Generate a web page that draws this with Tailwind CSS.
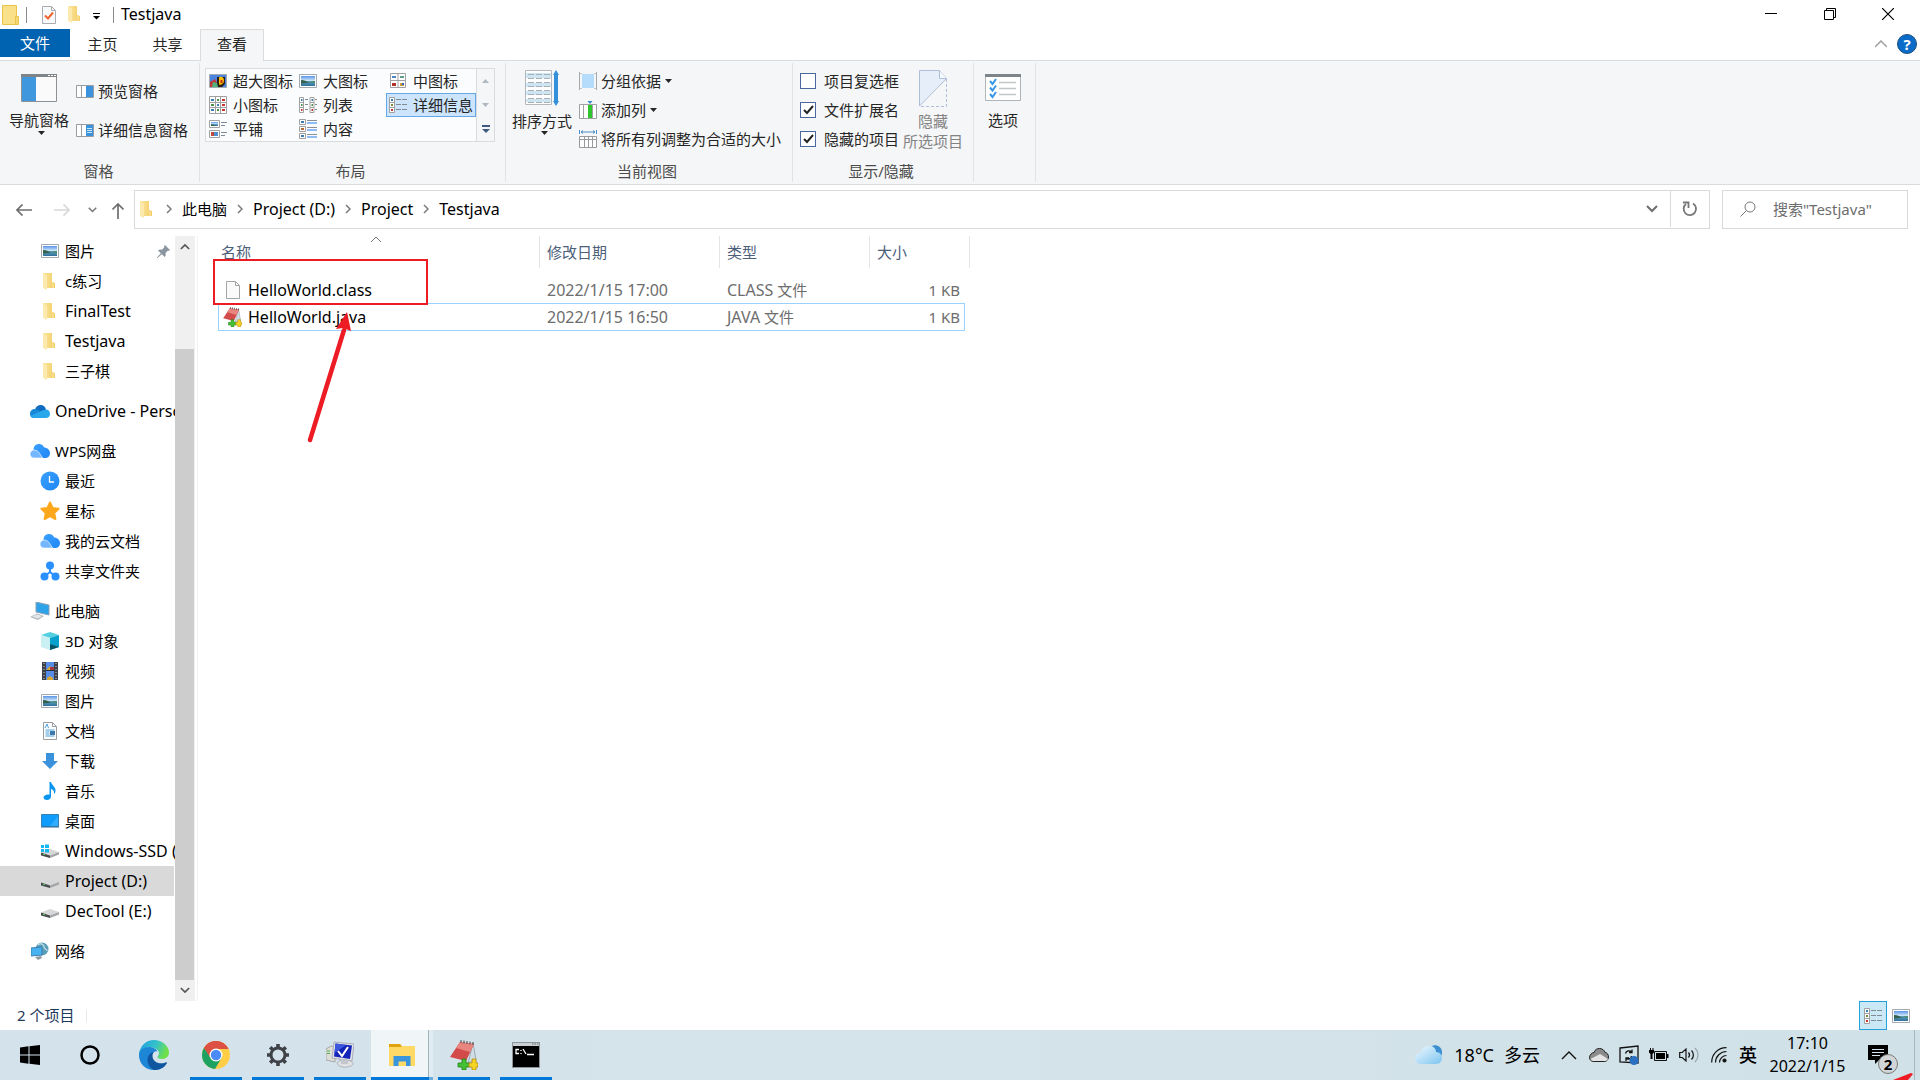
<!DOCTYPE html>
<html lang="zh-CN">
<head>
  <meta charset="UTF-8">
  <meta name="viewport" content="width=device-width, initial-scale=1.0">
  <title>Testjava</title>
  <script src="https://cdn.jsdelivr.net/npm/@tailwindcss/browser@4"></script>
</head>
<body class="h-screen flex flex-col overflow-hidden bg-white text-[15px] leading-5 text-black whitespace-nowrap font-['Noto_Sans','Noto_Sans_CJK_SC',sans-serif]">

  <!-- Shared icons -->
  <svg class="absolute w-0 h-0">
    <defs>
      <linearGradient id="sky" x1="0" y1="0" x2="0" y2="1"><stop offset="0" stop-color="#5a94e8"/><stop offset=".5" stop-color="#d5ecfa"/><stop offset=".55" stop-color="#5d9fc0"/><stop offset="1" stop-color="#2f6f9a"/></linearGradient>
      <linearGradient id="fold" x1="0" y1="0" x2="1" y2="0"><stop offset="0" stop-color="#fbe6a0"/><stop offset="1" stop-color="#f3cd65"/></linearGradient>
      <linearGradient id="blue" x1="0" y1="0" x2="1" y2="1"><stop offset="0" stop-color="#3aa0ff"/><stop offset="1" stop-color="#1f86f5"/></linearGradient>
      <symbol id="i-folder" viewBox="0 0 12 17">
        <path d="M0 0h9v10h3v5H4L0 14z" fill="url(#fold)"/><path d="M0 0l4 3v14l-4-2z" fill="#fce9ae"/><path d="M9 9h2v6H9z" fill="#f7dc8c"/>
      </symbol>
      <symbol id="i-photo" viewBox="0 0 18 14">
        <path d="M.5.5h17v13H.5z" fill="#fff" stroke="#a3a9b0"/><path d="M2 2h14v10H2z" fill="url(#sky)"/><path d="M2 6c4 0 6 2 9 2.500L2 9.500z" fill="#35614c"/><path d="M9 8l7-1v2z" fill="#4b8a63"/>
      </symbol>
      <symbol id="i-details" viewBox="0 0 18 16">
        <path d="M.5.5h5v15h-5zM.5 5.500h5M.5 10.500h5" fill="#fff" stroke="#a0a0a0"/><path d="M2 2h2v2H2z" fill="#3d7eb5"/><path d="M2 7h2v2H2z" fill="#7a8a3a"/><path d="M2 12h2v2H2z" fill="#c8322b"/><path d="M7 2.500h5M13 2.500h5M7 7.500h5M13 7.500h5M7 12.500h5M13 12.500h5" stroke="#808a94"/>
      </symbol>
      <symbol id="i-drive" viewBox="0 0 18 10">
        <path d="M0 4.500L9 1l9 3-9 3.500z" fill="#d5d7d8"/><path d="M0 4.500l9 3V10L0 7.500z" fill="#4a4d4e"/><path d="M9 7.500L18 4v2.500L9 10z" fill="#a3a6a8"/><path d="M2 6.500h2" stroke="#55c45f"/>
      </symbol>
      <symbol id="i-cloud2" viewBox="0 0 20 14">
        <path d="M3.500 6C3.500 2 6 0 9 0c2.500 0 4.500 1.500 5 3.500 3.500 0 6 2.500 6 5.500s-2 5-5 5h-2L5 7z" fill="url(#blue)"/><path d="M4 6c3 0 5 2 6 4l2.500 4H4c-2.500 0-4-1.800-4-4s1.800-4 4-4z" fill="#74b7ff" stroke="#fff" stroke-width=".6"/>
      </symbol>
      <symbol id="i-chev" viewBox="0 0 6 10"><path d="M1 1l4 4-4 4" fill="none" stroke="#7a7a7a" stroke-width="1.500"/></symbol>
      <symbol id="i-caret" viewBox="0 0 7 4"><path d="M0 0h7L3.500 4z" fill="currentColor"/></symbol>
      <symbol id="i-down" viewBox="0 0 12 8"><path d="M1 1l5 5 5-5" fill="none" stroke="currentColor" stroke-width="2"/></symbol>
      <symbol id="i-notepad" viewBox="0 0 28 30">
        <path d="M23 3l3 17-8 3z" fill="#cfdde6" stroke="#8f9aa3" stroke-width=".8"/><path d="M10 2l14 2-8 17-16-4z" fill="#d24a4a"/><path d="M10 2l14 2-4 8-14-4z" fill="#e8857f"/><path d="M11 0v3M14 .5v3M17 1v3M20 1.500v3M23 2v3" stroke="#444"/>
        <path d="M12 19h4v4h4v4h-4v3h-4v-3H8v-4h4z" fill="#45c233" stroke="#1f7d18" stroke-width=".8"/><path d="M22 19h4v4h2v4h-2v3h-4v-3h-3v-4h3z" fill="#f7d524" stroke="#b58b0c" stroke-width=".8"/>
      </symbol>
    </defs>
  </svg>

  <!-- Title bar -->
  <header class="flex h-[29px] items-center">
    <svg class="ml-0.5 w-[17px] h-5" viewBox="0 0 17 20"><path d="M.5.5h14v19H.5z" fill="#fbe08a" stroke="#e8c54a"/><path d="M13.500 11.500h3v8h-3z" fill="#f7d774" stroke="#e8c54a"/></svg>
    <span class="ml-[7px] w-px h-4 bg-[#8c8c8c]"></span>
    <svg class="ml-[15px] w-[14px] h-[18px]" viewBox="0 0 14 18"><path d="M.5.5h9l4 4v13H.5z" fill="#f7f9fb" stroke="#a9acb0"/><path d="M9.500.5v4h4" fill="none" stroke="#a9acb0"/><path d="M3 9.500l3 3 5-6" fill="none" stroke="#f0642c" stroke-width="2"/></svg>
    <svg class="ml-3 w-3 h-[17px]"><use href="#i-folder"/></svg>
    <svg class="ml-[13px] mt-1 w-[7px] h-[7px]" viewBox="0 0 7 7"><path d="M0 .5h7" stroke="#000"/><path d="M0 3h7L3.500 6.500z"/></svg>
    <span class="ml-[13px] w-px h-4 bg-[#8c8c8c]"></span>
    <h1 class="ml-[7px] pb-0.5 text-base leading-5">Testjava</h1>
    <div class="ml-auto mr-[3px] flex h-full pb-px">
      <button class="w-[59px] flex items-center justify-center" aria-label="最小化"><svg class="w-3 h-3" viewBox="0 0 12 12"><path d="M0 5.500h12" stroke="#000"/></svg></button>
      <button class="w-[59px] flex items-center justify-center" aria-label="向下还原"><svg class="w-3 h-3" viewBox="0 0 12 12" fill="none" stroke="#000"><path d="M.5 2.500h9v9h-9zM2.500 2.500v-2h9v9h-2"/></svg></button>
      <button class="w-[58px] flex items-center justify-center" aria-label="关闭"><svg class="w-3 h-3" viewBox="0 0 12 12"><path d="M0 0l12 12M12 0L0 12" stroke="#000" stroke-width="1.200"/></svg></button>
    </div>
  </header>

  <!-- Ribbon tabs -->
  <nav class="flex h-8 border-b border-[#dadbdc] text-[#262626]">
    <button class="w-[70px] h-7 bg-[#0063b1] text-white">文件</button>
    <button class="w-[65px] h-[30px]">主页</button>
    <button class="w-[65px] h-[30px]">共享</button>
    <button class="w-16 h-8 pb-1 bg-[#f5f6f7] border border-b-0 border-[#dadbdc]">查看</button>
    <button class="ml-auto w-8 h-[30px] flex items-center justify-center" aria-label="最小化功能区"><svg class="w-3 h-2" viewBox="0 0 12 8"><path d="M0 7l6-6 6 6" fill="none" stroke="#a0a0a0" stroke-width="1.500"/></svg></button>
    <button class="mt-[5px] mr-[3px] w-5 h-5 rounded-full bg-[#0a6bc9] border border-[#1f5180] text-white font-bold leading-[18px]" aria-label="帮助">?</button>
  </nav>

  <!-- Ribbon -->
  <section class="flex h-[124px] py-0.5 bg-[#f5f6f7] border-b border-[#dadbdc] text-[#262626]">
    <div class="w-[200px] flex flex-col border-r border-[#e2e3e4]">
      <div class="h-[98px] flex">
        <button class="ml-1.5 w-[66px] pt-[11px] flex flex-col items-center justify-start">
          <svg class="w-9 h-7" viewBox="0 0 36 28"><path d="M.5.5h35v27H.5z" fill="#fafafa" stroke="#8d9094"/><path d="M0 0h36v3H0z" fill="#7f8488"/><path d="M27 1h2v1h-2zM30 1h2v1h-2zM33 1h2v1h-2z" fill="#fff"/><path d="M1 3h14v24H1z" fill="#3f97de"/></svg>
          <span class="mt-2">导航窗格</span>
          <svg class="ml-1 mt-px w-[7px] h-1"><use href="#i-caret"/></svg>
        </button>
        <div class="ml-1 pt-[18px] flex flex-col items-start gap-[19px]">
          <button class="flex items-center gap-1"><svg class="w-[18px] h-[13px]" viewBox="0 0 18 13"><path d="M.5.5h17v12H.5zM5.500.5v12" fill="#fff" stroke="#9a9da0"/><path d="M10 1h7v11h-7z" fill="#3a93dc"/></svg>预览窗格</button>
          <button class="flex items-center gap-1"><svg class="w-[18px] h-[13px]" viewBox="0 0 18 13"><path d="M.5.5h17v12H.5zM5.500.5v12" fill="#fff" stroke="#9a9da0"/><path d="M10 1h7v11h-7z" fill="#3a93dc"/><path d="M11 4.500h5M11 6.500h5M11 8.500h5" stroke="#c9e4f8"/></svg>详细信息窗格</button>
        </div>
      </div>
      <div class="pr-0.5 text-center text-[#4c4c4c]">窗格</div>
    </div>

    <div class="w-[306px] flex flex-col border-r border-[#e2e3e4]">
      <div class="h-[98px]">
        <div class="ml-[5px] mt-[5px] w-[290px] h-[74px] flex border border-[#dadbdc] bg-[#fbfcfd]">
          <div class="grid grid-cols-[90px_90px_90px] grid-rows-[24px_24px_24px]">
            <button class="flex items-center gap-1.5 pl-[3px]"><svg class="w-[18px] h-[14px]" viewBox="0 0 18 14"><path d="M.5.5h17v13H.5z" fill="#4a83e0" stroke="#a3a9b0"/><path d="M1 8l5-3 4 8H1z" fill="#c2383a"/><path d="M8 3h8v7l-3 3H8z" fill="#2b1d13"/><path d="M10 3.500c2-2 5 0 5 3s-3 5-5 4z" fill="#ffbf00"/><path d="M11.500 6h2v3h-2z" fill="#c22d16"/><path d="M4 8l4 1 1 4H3z" fill="#4fb37c"/></svg>超大图标</button>
            <button class="flex items-center gap-1.5 pl-[3px]"><svg class="w-[18px] h-[14px]"><use href="#i-photo"/></svg>大图标</button>
            <button class="flex items-center gap-1.5 pl-[3px]"><svg class="w-[18px] h-4" viewBox="0 0 18 16"><path d="M1.500.5h15v14h-15zM9 .5v14M1.500 7.500h15" fill="#fff" stroke="#a0a0a0"/><path d="M3 3h4v2H3z" fill="#4b87c4"/><path d="M11 3h4v2h-4z" fill="#5e9c86"/><path d="M3 10h4v3H3z" fill="#b3302a"/><path d="M11 10h4v3h-4z" fill="#c9a038"/><path d="M13 10h2v2h-2z" fill="#3860c0"/></svg>中图标</button>
            <button class="flex items-center gap-1.5 pl-[3px]"><svg class="w-[18px] h-[18px]" viewBox="0 0 18 18"><path d="M.5.5h17v17H.5zM6.500.5v17M11.500.5v17M.5 6.500h17M.5 11.500h17" fill="#fff" stroke="#a0a0a0"/><path d="M2 3h3v2H2zM2 13h3v2H2zM8 8h2v2H8z" fill="#3d7eb5"/><path d="M8 3h2v2H8zM2 8h3v2H2zM8 13h2v2H8z" fill="#4e8f4a"/><path d="M13 3h3v2h-3zM13 8h3v2h-3zM13 13h3v2h-3z" fill="#c8322b"/></svg>小图标</button>
            <button class="flex items-center gap-1.5 pl-[3px]"><svg class="w-[18px] h-4" viewBox="0 0 18 16"><path d="M.5.5h4v15h-4zM.5 5.500h4M.5 10.500h4M11 .5h4v15h-4zM11 5.500h4M11 10.500h4" fill="#fff" stroke="#a0a0a0"/><path d="M2 2h1.500v2H2zM12.500 2H14v2h-1.500z" fill="#3d7eb5"/><path d="M2 7h1.500v2H2zM12.500 7H14v2h-1.500z" fill="#4e8f4a"/><path d="M2 12h1.500v2H2zM12.500 12H14v2h-1.500z" fill="#c8322b"/><path d="M6 2.500h3M6 7.500h3M6 12.500h3M16 2.500h2M16 7.500h2M16 12.500h2" stroke="#808a94"/></svg>列表</button>
            <button class="flex items-center gap-1.5 pl-0.5 bg-[#cce4fc] border border-[#66a7e8]"><svg class="w-[18px] h-4"><use href="#i-details"/></svg>详细信息</button>
            <button class="flex items-center gap-1.5 pl-[3px]"><svg class="w-[18px] h-[18px]" viewBox="0 0 18 18"><path d="M.5.5h10v7H.5zM.5 10.500h10v7H.5z" fill="#fff" stroke="#a0a0a0"/><path d="M2 2h7v4H2z" fill="url(#sky)"/><path d="M2 4l5 2H2z" fill="#35614c"/><path d="M2 12h3v4H2z" fill="#c24a3a"/><path d="M5 12h4v4H5z" fill="#4e8fd0"/><path d="M12 2.500h6M12 5.500h4M12 12.500h6M12 15.500h4" stroke="#808a94"/></svg>平铺</button>
            <button class="flex items-center gap-1.5 pl-[3px]"><svg class="w-[18px] h-5" viewBox="0 0 18 20"><path d="M.5.5h6v5h-6zM.5 7.500h6v5h-6zM.5 14.500h6v5h-6z" fill="#fff" stroke="#a0a0a0"/><path d="M2 2h3v2H2zM2 16h3v2H2z" fill="#3d7eb5"/><path d="M2 9h3v2H2z" fill="#b36b35"/><path d="M8 1.500h10M8 8.500h10M8 15.500h10" stroke="#8a9097"/><path d="M8 4h10M8 11h10M8 18h10" stroke="#6ba6f5" stroke-width="1.500"/></svg>内容</button>
          </div>
          <div class="ml-auto w-[18px] grid grid-rows-3 border-l border-[#dadbdc] bg-[#f5f6f7]">
            <button class="flex items-center justify-center text-[#b0b8c2]" aria-label="向上"><svg class="w-[7px] h-1 rotate-180"><use href="#i-caret"/></svg></button>
            <button class="flex items-center justify-center text-[#b0b8c2]" aria-label="向下"><svg class="w-[7px] h-1"><use href="#i-caret"/></svg></button>
            <button class="flex items-center justify-center" aria-label="更多"><svg class="w-2 h-2" viewBox="0 0 8 8" fill="#3f5a80"><path d="M0 0h8v2H0zM0 4h8L4 8z"/></svg></button>
          </div>
        </div>
      </div>
      <div class="pr-1 text-center text-[#4c4c4c]">布局</div>
    </div>

    <div class="w-[287px] flex flex-col border-r border-[#e2e3e4]">
      <div class="h-[98px] flex">
        <button class="ml-[3px] w-[66px] pt-[7px] flex flex-col items-center justify-start">
          <svg class="w-[34px] h-9" viewBox="0 0 34 36"><path d="M.5.5h26v34H.5z" fill="#fff" stroke="#b4b8bc"/><path d="M1 3h25v5H1zM1 13h25v4H1zM1 21h25v4H1zM1 29h25v3H1z" fill="#cfe6f2"/><path d="M3 4.500h6M11 4.500h6M19 4.500h6M3 8.500h6M11 8.500h6M19 8.500h6M3 12.500h6M11 12.500h6M19 12.500h6M3 16.500h6M11 16.500h6M19 16.500h6M3 20.500h6M11 20.500h6M19 20.500h6M3 24.500h6M11 24.500h6M19 24.500h6M3 28.500h6M11 28.500h6M19 28.500h6M3 32.500h6M11 32.500h6M19 32.500h6" stroke="#a5afb6"/><path d="M31 0l3 5h-1v26h1l-3 5-3-5h1V5h-1z" fill="#3590dc"/></svg>
          <span class="mt-[5px]">排序方式</span>
          <svg class="ml-1 w-[7px] h-1"><use href="#i-caret"/></svg>
        </button>
        <div class="ml-1 pt-2 flex flex-col items-start gap-[9px]">
          <button class="flex items-center gap-1"><svg class="w-[18px] h-[18px]" viewBox="0 0 18 18"><path d="M.5 0v18M17.500 0v18" stroke="#a8abae"/><path d="M1 1.500h2M1 16.500h2M15 1.500h2M15 16.500h2" stroke="#c9cbcd"/><path d="M3 2h12v14H3z" fill="#b5dcfa"/></svg>分组依据<svg class="w-[7px] h-1"><use href="#i-caret"/></svg></button>
          <button class="flex items-center gap-1"><svg class="w-[18px] h-[18px]" viewBox="0 0 18 18"><path d="M.5 3.500h17v14H.5zM4.500 3.500v14M13.500 3.500v14" fill="#fff" stroke="#a0a3a6"/><path d="M9 4h4v13H9z" fill="#2fc52f"/><path d="M8.500 0h5L11 3z" fill="#3a86cf"/></svg>添加列<svg class="w-[7px] h-1"><use href="#i-caret"/></svg></button>
          <button class="flex items-center gap-1"><svg class="w-[18px] h-[18px]" viewBox="0 0 18 18"><path d="M.5 6.500h17v11H.5zM.5 9.500h17M5.500 6.500v11M9.500 6.500v11M13.500 6.500v11" fill="#fff" stroke="#989b9e"/><path d="M.5 0v4M17.500 0v4M2 2h14M4 .5L2 2l2 1.500M14 .5L16 2l-2 1.500" fill="none" stroke="#4b8cc8"/></svg>将所有列调整为合适的大小</button>
        </div>
      </div>
      <div class="pr-1 text-center text-[#4c4c4c]">当前视图</div>
    </div>

    <div class="w-[181px] flex flex-col border-r border-[#e2e3e4]">
      <div class="h-[98px] flex">
        <div class="ml-[7px] pt-2 w-[100px] flex flex-col gap-[9px]">
          <label class="relative flex items-center gap-2"><input type="checkbox" class="peer appearance-none w-4 h-4 bg-white border border-[#4a68a0]">项目复选框<svg class="hidden peer-checked:block absolute left-[3px] w-[11px] h-[10px]" viewBox="0 0 11 10"><path d="M1 5l3 3 6-7" fill="none" stroke="#222" stroke-width="2"/></svg></label>
          <label class="relative flex items-center gap-2"><input type="checkbox" checked class="peer appearance-none w-4 h-4 bg-white border border-[#4a68a0]">文件扩展名<svg class="hidden peer-checked:block absolute left-[3px] w-[11px] h-[10px]" viewBox="0 0 11 10"><path d="M1 5l3 3 6-7" fill="none" stroke="#222" stroke-width="2"/></svg></label>
          <label class="relative flex items-center gap-2"><input type="checkbox" checked class="peer appearance-none w-4 h-4 bg-white border border-[#4a68a0]">隐藏的项目<svg class="hidden peer-checked:block absolute left-[3px] w-[11px] h-[10px]" viewBox="0 0 11 10"><path d="M1 5l3 3 6-7" fill="none" stroke="#222" stroke-width="2"/></svg></label>
        </div>
        <button class="w-[66px] pt-[7px] flex flex-col items-center justify-start text-[#838383]" disabled>
          <svg class="w-7 h-[37px]" viewBox="0 0 28 37"><path d="M.5 36V.5h20l7 8z" fill="#e6eefa" stroke="#b0bfd8"/><path d="M20.500.5v8h7" fill="#f5f8fd" stroke="#b0bfd8"/><path d="M27.500 9v27.500H1" fill="none" stroke="#b0bfd8" stroke-dasharray="3 2"/></svg>
          <span class="mt-1 leading-5">隐藏</span>
          <span class="leading-5">所选项目</span>
        </button>
      </div>
      <div class="pr-1 text-center text-[#4c4c4c]">显示/隐藏</div>
    </div>

    <div class="w-[62px] border-r border-[#e2e3e4]">
      <button class="w-[58px] pt-[11px] flex flex-col items-center">
        <svg class="w-9 h-7" viewBox="0 0 36 28"><path d="M.5.5h35v26H.5z" fill="#fff" stroke="#b2b5b8"/><path d="M0 0h36v3H0z" fill="#7f8488"/><path d="M14 8.500h17M14 14.500h17M14 20.500h17" stroke="#c2c5c8" stroke-width="1.500"/><path d="M5 7l2.500 3L11 5M5 13.500l2.500 3 3.500-5M5 20l2.500 3 3.500-5" fill="none" stroke="#3a98e6" stroke-width="2"/></svg>
        <span class="mt-2">选项</span>
      </button>
    </div>
  </section>

  <!-- Address bar -->
  <section class="flex h-[51px] pt-[5px] pb-[7px] pr-3">
    <button class="ml-2 w-8 flex items-center justify-center" aria-label="后退"><svg class="w-4 h-3" viewBox="0 0 16 12"><path d="M16 6H1M6.500.5L1 6l5.500 5.500" fill="none" stroke="#6e6e6e" stroke-width="1.700"/></svg></button>
    <button class="ml-1.5 w-8 flex items-center justify-center" aria-label="前进" disabled><svg class="w-4 h-3" viewBox="0 0 16 12"><path d="M0 6h15M9.500.5L15 6l-5.500 5.500" fill="none" stroke="#d8d8d8" stroke-width="1.700"/></svg></button>
    <button class="ml-1.5 w-4 flex items-center justify-center text-[#777]" aria-label="最近浏览的位置"><svg class="w-[9px] h-1.5"><use href="#i-down"/></svg></button>
    <button class="ml-2 w-5 mr-1.5 flex items-center justify-center" aria-label="上移"><svg class="mt-0.5 w-3 h-4" viewBox="0 0 12 16"><path d="M6 16V1M.5 6.500L6 1l5.500 5.500" fill="none" stroke="#6e6e6e" stroke-width="1.700"/></svg></button>
    <div class="flex-1 flex items-center border border-[#d9d9d9] pl-[5px] pb-px">
      <svg class="w-3 h-[17px]"><use href="#i-folder"/></svg>
      <svg class="ml-3.5 w-1.5 h-2.5"><use href="#i-chev"/></svg>
      <a href="#" class="ml-2.5">此电脑</a>
      <svg class="ml-2.5 w-1.5 h-2.5"><use href="#i-chev"/></svg>
      <a href="#" class="ml-2.5 text-base leading-5">Project (D:)</a>
      <svg class="ml-2.5 w-1.5 h-2.5"><use href="#i-chev"/></svg>
      <a href="#" class="ml-2.5 text-base leading-5">Project</a>
      <svg class="ml-2.5 w-1.5 h-2.5"><use href="#i-chev"/></svg>
      <a href="#" class="ml-2.5 text-base leading-5">Testjava</a>
      <button class="ml-auto w-9 h-full flex items-center justify-center text-[#6e6e6e]" aria-label="以前的位置"><svg class="w-3 h-2"><use href="#i-down"/></svg></button>
      <button class="w-[39px] h-full flex items-center justify-center border-l border-[#d9d9d9]" aria-label="刷新"><svg class="w-4 h-4" viewBox="0 0 16 16"><path d="M11 2.500A6.200 6.200 0 1 1 4 3" fill="none" stroke="#777" stroke-width="1.800"/><path d="M1 1.500h5.500V7" fill="none" stroke="#777" stroke-width="1.800"/></svg></button>
    </div>
    <label class="ml-3 w-[186px] flex items-center border border-[#d9d9d9] pl-[17px] pb-px">
      <svg class="w-4 h-4 shrink-0" viewBox="0 0 16 16"><circle cx="10" cy="6" r="5" fill="none" stroke="#777"/><path d="M6.500 9.500L.5 15.500" stroke="#777"/></svg>
      <input type="text" placeholder="搜索&quot;Testjava&quot;" aria-label="搜索" class="ml-[17px] w-[126px] outline-none placeholder:text-[#6d6d6d]">
    </label>
  </section>

  <!-- Navigation pane and file list -->
  <main class="flex-1 min-h-0 flex">
    <aside class="w-[175px] overflow-hidden">
      <ul>
        <li class="h-[30px] pl-[41px] flex items-center gap-1.5"><svg class="w-[18px] h-[14px]"><use href="#i-photo"/></svg>图片
          <svg class="ml-auto mr-[5px] w-[13px] h-[13px]" viewBox="0 0 13 13" fill="#8a959f"><path d="M8 0l5 5-1 1-1-.5L8.500 8c.5 2 0 3-.8 4L1 5.500c1-1 2.200-1.300 4-.8L7.500 2 7 1z"/><path d="M4 8l1 1-4.500 4H0v-.5z"/></svg>
        </li>
        <li class="h-[30px] pl-[43px] flex items-center gap-2.5"><svg class="w-3 h-[17px]"><use href="#i-folder"/></svg>c练习</li>
        <li class="h-[30px] pl-[43px] flex items-center gap-2.5 text-base leading-5"><svg class="w-3 h-[17px]"><use href="#i-folder"/></svg>FinalTest</li>
        <li class="h-[30px] pl-[43px] flex items-center gap-2.5 text-base leading-5"><svg class="w-3 h-[17px]"><use href="#i-folder"/></svg>Testjava</li>
        <li class="h-[30px] pl-[43px] flex items-center gap-2.5"><svg class="w-3 h-[17px]"><use href="#i-folder"/></svg>三子棋</li>
      </ul>
      <ul class="mt-2.5">
        <li class="h-[30px] pl-[30px] flex items-center gap-[5px] text-base leading-5"><svg class="w-5 h-[13px] shrink-0" viewBox="0 0 20 13"><path d="M5 4.500C6 1.500 8 0 10.500 0c3 0 5 2 5.500 4.500L10 9z" fill="#0f6cc0"/><path d="M4 13c-3 0-4-2-4-4 0-3 2-5 5-5 2 0 3 .8 5 2l-4 7z" fill="#1789d6"/><path d="M16 4.500c2.500 0 4 2 4 4.500 0 2.500-2 4-4 4H4c-2 0-3-1-3.500-2L11 6z" fill="#28a8ea"/></svg>OneDrive - Personal</li>
      </ul>
      <ul class="mt-2.5">
        <li class="h-[30px] pl-[30px] flex items-center gap-[5px]"><svg class="w-5 h-[14px]"><use href="#i-cloud2"/></svg>WPS网盘</li>
        <li class="h-[30px] pl-10 flex items-center gap-[5px]"><svg class="w-5 h-5" viewBox="0 0 20 20"><circle cx="10" cy="10" r="9.500" fill="url(#blue)"/><path d="M9.500 5v6H14" fill="none" stroke="#fff" stroke-width="1.300"/></svg>最近</li>
        <li class="h-[30px] pl-10 flex items-center gap-[5px]"><svg class="w-5 h-5" viewBox="0 0 20 20"><path d="M10 1.500l2.600 5.500 6 .8-4.400 4.200 1.200 6L10 15.200 4.600 18l1.200-6L1.400 7.800l6-.8z" fill="#fda81c" stroke="#fda81c" stroke-width="2" stroke-linejoin="round"/></svg>星标</li>
        <li class="h-[30px] pl-10 flex items-center gap-[5px]"><svg class="w-5 h-[14px]"><use href="#i-cloud2"/></svg>我的云文档</li>
        <li class="h-[30px] pl-10 flex items-center gap-[5px]"><svg class="w-5 h-5" viewBox="0 0 20 20" fill="#2a90ff"><path d="M10 5v6M10 11l-5 4M10 11l5 4" stroke="#2a90ff" stroke-width="2"/><circle cx="10" cy="4.500" r="4"/><circle cx="4.500" cy="15.500" r="4"/><circle cx="15.500" cy="15.500" r="4"/></svg>共享文件夹</li>
      </ul>
      <ul class="mt-2.5">
        <li class="h-[30px] pl-[30px] flex items-center gap-[5px]"><svg class="w-5 h-[18px]" viewBox="0 0 20 18"><path d="M6 0l13 3v10L6 10z" fill="#2ea3ea" stroke="#8ea1b0"/><path d="M0 15l7-3.500 7 2.500-6 4z" fill="#b4b9bd"/><path d="M2 14.500l5-2 5 1.500-4 2.500z" fill="#e4e6e8"/></svg>此电脑</li>
        <li class="h-[30px] pl-[41px] flex items-center gap-1.5"><svg class="w-[18px] h-[18px]" viewBox="0 0 18 18"><path d="M9 0l9 3-9 3-9-3z" fill="#54cfe0"/><path d="M0 3l9 3v12l-9-3z" fill="#c9f0f2"/><path d="M9 6l9-3v12l-9 3z" fill="#08a0cc"/><path d="M9 12l9 3-9 3z" fill="#0b5568"/></svg>3D 对象</li>
        <li class="h-[30px] pl-[41px] flex items-center gap-1.5"><svg class="w-[18px] h-[18px]" viewBox="0 0 18 18"><path d="M1 0h16v18H1z" fill="#3c4048"/><path d="M5 0h8v8H5zM5 9h8v9H5z" fill="#558de8"/><path d="M6 7l3-3 3 3v2H6zM6 16l3-2 3 2v2H6z" fill="#d8a832"/><path d="M9 5h4v3H9z" fill="#a83b3a"/><path d="M5 8.500h8" stroke="#26303c"/><path d="M3 1v17M15 1v17" stroke="#d0d0d0" stroke-dasharray="1 2"/></svg>视频</li>
        <li class="h-[30px] pl-[41px] flex items-center gap-1.5"><svg class="w-[18px] h-[14px]"><use href="#i-photo"/></svg>图片</li>
        <li class="h-[30px] pl-[41px] flex items-center gap-1.5"><svg class="w-[18px] h-[18px]" viewBox="0 0 18 18"><path d="M2.500.5h9l4 4v13h-13z" fill="#fbfcfd" stroke="#9a9da0"/><path d="M11.500.5v4h4" fill="none" stroke="#9a9da0"/><path d="M4 6l2-4 1.500 4M4.500 8h9M4.500 10h4M4.500 12h4M4.500 14h9" fill="none" stroke="#4fa0dc"/><path d="M9 9h5v4H9z" fill="#3d78a8"/></svg>文档</li>
        <li class="h-[30px] pl-[41px] flex items-center gap-1.5"><svg class="w-[18px] h-[18px]" viewBox="0 0 18 18"><path d="M5 1h8v8h4l-8 8-8-8h4z" fill="#3a92dc"/></svg>下载</li>
        <li class="h-[30px] pl-[41px] flex items-center gap-1.5"><svg class="w-[18px] h-[18px]" viewBox="0 0 18 18"><path d="M8.500 0H10c.5 3 5 5 4.500 9-.1 1.500-.7 2.500-1.500 3 .5-3-1-4.500-3-5v7.500c0 2-1.800 3.500-4 3.500s-3.500-1-3.500-2.500C2.500 13.500 5 12 8.500 12.500z" fill="#0a96f0"/></svg>音乐</li>
        <li class="h-[30px] pl-[41px] flex items-center gap-1.5"><svg class="w-[18px] h-[14px]" viewBox="0 0 18 14"><path d="M.5.5h17v12H.5z" fill="#109cfa" stroke="#3582b8"/><path d="M9 12L17 2v10z" fill="#32adff"/><path d="M0 13h18" stroke="#2b6c9c"/></svg>桌面</li>
        <li class="h-[30px] pl-[41px] flex items-center gap-1.5 text-base leading-5"><svg class="w-[18px] h-[14px] shrink-0" viewBox="0 0 18 14"><use href="#i-drive" y="4" width="18" height="10"/><path d="M0 1h3v3H0zM4 .5h4V4H4zM0 5h3v3H0zM4 5h4v3.500H4z" fill="#14b8f0"/></svg>Windows-SSD (C:)</li>
        <li class="h-[30px] mr-px pl-[41px] flex items-center gap-1.5 bg-[#d9d9d9] text-base leading-5"><svg class="mt-1 w-[18px] h-2.5"><use href="#i-drive"/></svg>Project (D:)</li>
        <li class="h-[30px] pl-[41px] flex items-center gap-1.5 text-base leading-5"><svg class="mt-1 w-[18px] h-2.5"><use href="#i-drive"/></svg>DecTool (E:)</li>
      </ul>
      <ul class="mt-2.5">
        <li class="h-[30px] pl-[31px] flex items-center gap-1.5"><svg class="w-[18px] h-[18px]" viewBox="0 0 18 18"><circle cx="11" cy="7" r="6.500" fill="#5b9cb8"/><path d="M7 3c3-3 6 0 6 2s3 2 3 4" fill="none" stroke="#b8dbe6" stroke-width="1.500"/><path d="M0 6l11-1v8L0 14z" fill="#46b2f2" stroke="#3c7fae"/><path d="M4 15l6-1 1 2-4 2z" fill="#8c9aa3"/></svg>网络</li>
      </ul>
    </aside>
    <div class="w-5 flex flex-col bg-[#f0f0f0] text-[#555]">
      <button class="h-5 flex items-center justify-center" aria-label="向上滚动"><svg class="w-2.5 h-[7px] rotate-180"><use href="#i-down"/></svg></button>
      <div class="mt-[93px] mr-px flex-1 bg-[#cdcdcd]"></div>
      <button class="h-[21px] flex items-center justify-center" aria-label="向下滚动"><svg class="w-2.5 h-[7px]"><use href="#i-down"/></svg></button>
    </div>

    <div class="relative flex-1 ml-0.5 border-l border-[#f2f2f2] pl-5">
      <table class="w-[752px] table-fixed border-separate border-spacing-0 text-left">
        <colgroup><col class="w-[322px]"><col class="w-[180px]"><col class="w-[150px]"><col class="w-[95px]"><col class="w-[5px]"></colgroup>
        <thead>
          <tr class="text-[#4c607a]">
            <th class="p-0 h-10 align-top font-normal relative"><div class="h-8 pl-[3px] flex items-center border-r border-[#e5e5e5]">名称</div><svg class="absolute left-[152px] top-0 w-3 h-[7px]" viewBox="0 0 12 7"><path d="M1 6l5-5 5 5" fill="none" stroke="#777"/></svg></th>
            <th class="p-0 align-top font-normal"><div class="h-8 pl-[7px] flex items-center border-r border-[#e5e5e5]">修改日期</div></th>
            <th class="p-0 align-top font-normal"><div class="h-8 pl-[7px] flex items-center border-r border-[#e5e5e5]">类型</div></th>
            <th class="p-0 align-top font-normal"><div class="h-8 pl-[7px] flex items-center">大小</div></th>
            <th class="p-0 align-top"><div class="h-8 border-r border-[#e5e5e5]"></div></th>
          </tr>
        </thead>
        <tbody class="text-[#6d6d6d]">
          <tr>
            <td class="p-0 h-[27px]"><div class="pl-2 flex items-center gap-2 text-base leading-5 text-black"><svg class="w-[14px] h-[18px]" viewBox="0 0 14 18"><path d="M.5.5h9l4 4v13H.5z" fill="#fafafa" stroke="#a5a5a5"/><path d="M9.500.5v4h4" fill="none" stroke="#a5a5a5"/></svg>HelloWorld.class</div></td>
            <td class="p-0 pl-[7px] text-base leading-5">2022/1/15 17:00</td>
            <td class="p-0 pl-[7px]"><span class="text-base leading-5">CLASS</span> 文件</td>
            <td class="p-0 pr-[5px] text-right">1 KB</td>
            <td class="p-0"></td>
          </tr>
          <tr>
            <td class="p-0 h-7 border-y border-l border-[#99d1ff]"><div class="pl-1 flex items-center gap-1.5 text-base leading-5 text-black"><svg class="w-[19px] h-5"><use href="#i-notepad"/></svg>HelloWorld.java</div></td>
            <td class="p-0 pl-[7px] border-y border-[#99d1ff] text-base leading-5">2022/1/15 16:50</td>
            <td class="p-0 pl-[7px] border-y border-[#99d1ff]"><span class="text-base leading-5">JAVA</span> 文件</td>
            <td class="p-0 pr-1 text-right border-y border-r border-[#99d1ff]">1 KB</td>
            <td class="p-0"></td>
          </tr>
        </tbody>
      </table>
      <!-- Red marker box and arrow -->
      <div class="absolute left-[15px] top-[23px] w-[215px] h-[46px] border-2 border-[#ed1c24]"></div>
      <svg class="absolute left-[106px] top-[72px] w-[60px] h-[140px]" viewBox="0 0 60 140"><path d="M6 132L40 22" stroke="#ed1c24" stroke-width="4.500" stroke-linecap="round"/><path d="M43 4l4 19-8-3-7 1z" fill="#ed1c24"/></svg>
    </div>
  </main>

  <!-- Status bar -->
  <footer class="flex h-[29px] items-center pl-[17px] pr-[5px] text-[#1e395b]">
    <span class="pb-0.5">2 个项目</span>
    <span class="ml-3 w-px h-3 bg-[#e8e8e8]"></span>
    <button class="ml-auto w-7 h-[29px] flex items-center justify-center bg-[#cbe8f6] border border-[#26a0da]" aria-label="详细信息"><svg class="w-[18px] h-4"><use href="#i-details"/></svg></button>
    <button class="w-7 h-[29px] flex items-center justify-center" aria-label="大缩略图"><svg class="w-[18px] h-[14px]"><use href="#i-photo"/></svg></button>
  </footer>

  <!-- Taskbar -->
  <section class="relative flex h-[50px] bg-linear-to-r from-[#d4e2ec] via-[#d5e3ea] to-[#d0e1e8]">
    <button class="w-[60px] flex items-center justify-center" aria-label="开始"><svg class="w-5 h-5" viewBox="0 0 20 20"><path d="M0 2.500l8.500-1.200v8.200H0zM9.500 1.200L20 0v9.500H9.500zM0 10.500h8.500v8.200L0 17.500zM9.500 10.500H20V20L9.500 18.800z"/></svg></button>
    <button class="w-[60px] flex items-center justify-center" aria-label="搜索"><svg class="w-5 h-5" viewBox="0 0 20 20"><circle cx="10" cy="10" r="8.500" fill="none" stroke="#000" stroke-width="2.500"/></svg></button>
    <button class="ml-[3px] w-[62px] flex items-center justify-center" aria-label="Edge">
      <svg class="w-[30px] h-[30px]" viewBox="0 0 30 30"><defs><linearGradient id="edge" x1="0" y1="0" x2="1" y2=".3"><stop offset="0" stop-color="#1b9de2"/><stop offset=".6" stop-color="#35c3c8"/><stop offset="1" stop-color="#6fe04a"/></linearGradient></defs><path d="M0 14C1 6 7 0 15 0s15 6 15 12.500c0 4-3 6.500-7 6.500-3 0-4.500-1-4.500-2s1.500-1.500 1.500-4c0-2-2-4-5-5C9 6 2 9 0 14z" fill="url(#edge)"/><path d="M13 7.500C7 6 1 9 0 14c-.5 9 6 16 15 16l2-1C8 26 8 14 15 12c1-.8 2.500-1 3.500-.5C17.500 9.500 15.500 8 13 7.500z" fill="#1d86d6"/><path d="M14 12c-8 3-7 14 1 18 6 .5 11-3 13-7 0-1-.5-1-1.500-.6-6 2.600-13-.4-13-6.400 0-1.700.5-3 1.500-4z" fill="#0f56a0"/></svg>
    </button>
    <button class="w-[62px] flex items-center justify-center relative" aria-label="Chrome">
      <svg class="w-7 h-7" viewBox="0 0 28 28"><circle cx="14" cy="14" r="14" fill="#ffcd46"/><path d="M14 14L2 6.800A14 14 0 0 0 13 28L19.500 17z" fill="#1da261"/><path d="M14 14L2 7A14 14 0 0 1 26.500 8H14z" fill="#dd5144"/><path d="M2 7l6.500 10L14 8h12.500C20-3 7-2 2 7z" fill="#dd5144"/><circle cx="14" cy="14" r="6.500" fill="#fff"/><circle cx="14" cy="14" r="5.200" fill="#4c8bf5"/></svg>
      <span class="absolute bottom-0 inset-x-[5px] h-[3px] bg-[#0078d7]"></span>
    </button>
    <button class="w-[62px] flex items-center justify-center relative" aria-label="设置">
      <svg class="w-6 h-6" viewBox="0 0 24 24" fill="none" stroke="#3f4347"><circle cx="12" cy="12" r="7" stroke-width="3"/><path d="M12 5V1M12 19v4M5 12H1M19 12h4M7.050 7.050L4.200 4.200M16.950 16.950l2.850 2.850M7.050 16.950L4.200 19.800M16.950 7.050l2.850-2.850" stroke-width="3.600"/></svg>
      <span class="absolute bottom-0 inset-x-[5px] h-[3px] bg-[#0078d7]"></span>
    </button>
    <button class="w-[62px] flex items-center justify-center relative" aria-label="系统配置">
      <svg class="w-7 h-7" viewBox="0 0 28 28"><path d="M0 8l5-3 4 1v15l-9-2z" fill="#dddeda" stroke="#9a9a98" stroke-width=".8"/><path d="M1 10h3M1 12.500h3" stroke="#4cab42"/><path d="M8 1l20 2-2 17L6 17z" fill="#e2e3e8" stroke="#9aa0ae" stroke-width=".8"/><path d="M9.500 2.500L26 4.500l-2 13.500L8 15.500z" fill="#1424b8"/><path d="M9.500 2.500L20 4 8.500 12z" fill="#3c57de"/><path d="M12 10l4 5 6-9" fill="none" stroke="#fff" stroke-width="2"/><path d="M11 22c2-4 14-4 16 0s-14 7-16 0z" fill="#dfe1e4" stroke="#a5a8ac" stroke-width=".8"/><path d="M15 18l7 1v4h-7z" fill="#c3c6cb"/></svg>
      <span class="absolute bottom-0 inset-x-[5px] h-[3px] bg-[#0078d7]"></span>
    </button>
    <button class="w-[62px] flex items-center relative bg-[#e1ecf2] pr-1" aria-label="文件资源管理器">
      <span class="w-[58px] h-full flex items-center justify-center pl-1 bg-[#f0f5f8] border-r border-[#9fb3bd]">
        <svg class="w-[26px] h-6" viewBox="0 0 26 24"><path d="M0 1h11l2 2v3H0z" fill="#e0a20e"/><path d="M0 4h11l2-1h13v20H0z" fill="#ffd966"/><path d="M4.500 23V13h17v10H17v-4.500H9.500V23z" fill="#3a96dc"/></svg>
      </span>
      <span class="absolute bottom-0 inset-x-0 h-[3px] bg-[#0078d7] border-r-4 border-[#6cadE0]"></span>
    </button>
    <button class="w-[62px] flex items-center justify-center relative" aria-label="文本编辑器">
      <svg class="w-7 h-[30px]"><use href="#i-notepad"/></svg>
      <span class="absolute bottom-0 inset-x-[5px] h-[3px] bg-[#0078d7]"></span>
    </button>
    <button class="w-[62px] flex items-center justify-center relative" aria-label="命令提示符">
      <svg class="w-7 h-[26px]" viewBox="0 0 28 26"><path d="M.5.5h27v25H.5z" fill="#000" stroke="#8e9498"/><path d="M1 1h26v3H1z" fill="#c9d0d4"/><path d="M20 2h1.500M22.500 2H24M25 2h1.500" stroke="#666"/><path d="M7 7.500H4v4h3M9 8v1M9 11v1M11 7l3 5M15 12.500h7" fill="none" stroke="#fff" stroke-width="1.300"/></svg>
      <span class="absolute bottom-0 inset-x-[5px] h-[3px] bg-[#0078d7]"></span>
    </button>

    <div class="ml-auto flex items-center">
      <button class="flex items-center text-[18px]">
        <svg class="w-7 h-5" viewBox="0 0 28 20"><defs><linearGradient id="cl" x1="0" y1="0" x2="1" y2="1"><stop offset="0" stop-color="#f0faff"/><stop offset="1" stop-color="#7cc4f0"/></linearGradient></defs><path d="M17 1c4-2 10 1 10 6s-2 6-4 6z" fill="#3c8fd0"/><path d="M6 19c-3 0-6-2-6-6 0-3 2-5 6-6 1-4 4-6 8-6s7 2 7 6c4 0 6 3 6 6s-2 6-6 6z" fill="url(#cl)"/></svg>
        <span class="ml-[11px]">18°C</span><span class="ml-2.5">多云</span>
      </button>
      <button class="ml-[21px]" aria-label="显示隐藏的图标"><svg class="w-4 h-[10px]" viewBox="0 0 16 10"><path d="M1 9l7-7 7 7" fill="none" stroke="#111" stroke-width="1.400"/></svg></button>
      <svg class="ml-3 w-5 h-[14px]" viewBox="0 0 20 14"><path d="M5 4.500C6 1.500 8 .5 10.500.5c3 0 5 2 5.500 4 2 0 3.500 2 3.500 4.500s-2 4.500-4 4.500H4.500c-2.500 0-4-2-4-4s2-5 4.500-5z" fill="#8c8c8c" stroke="#222"/><path d="M1.500 11L11 6l8 5c-1 1.500-2 2-3.500 2h-11c-1.500 0-2.500-1-3-2z" fill="#e4e4e4"/></svg>
      <svg class="ml-2.5 w-5 h-5" viewBox="0 0 20 20"><path d="M1 3l18-2v17l-18-1z" fill="none" stroke="#111" stroke-width="1.300"/><path d="M6.500 8.500a3.500 3.500 0 0 1 6-1.500M13 4.500v3h-3M12.500 11a3.500 3.500 0 0 1-5.500 2.500M7 16v-3h3" fill="none" stroke="#111" stroke-width="1.300"/><circle cx="15" cy="15.500" r="4.500" fill="#2a6fc0"/></svg>
      <svg class="ml-2.5 w-5 h-[14px]" viewBox="0 0 20 14"><path d="M5.500 3.500h12v9h-12z" fill="none" stroke="#111"/><path d="M7 5h9v6H7zM18 6h1.500v4H18zM0 2h5v2.500L3.500 6v5h-2V6L0 4.500zM1 0h1v2H1zM3.500 0h1v2h-1z"/></svg>
      <svg class="ml-2.5 w-5 h-4" viewBox="0 0 20 16" fill="none" stroke="#111" stroke-width="1.200"><path d="M.7 5.500h2.500L7 2v12l-3.800-3.500H.7zM9.500 5.500c1.300 1.500 1.300 3.500 0 5M12.500 3.500c2.500 2.500 2.500 6.500 0 9"/><path d="M16 1c4 4 4 10 0 14" stroke="#9aa6ad"/></svg>
      <svg class="ml-3 w-4 h-4" viewBox="0 0 16 16" fill="none" stroke="#111" stroke-width="1.200"><path d="M.7 15.500A14.500 14.500 0 0 1 15.500.7M4.500 15.500A11 11 0 0 1 15.500 4.500M8.500 15.500A7 7 0 0 1 15.500 8.500"/><circle cx="13.500" cy="13.500" r="1.500" fill="#111"/></svg>
      <span class="ml-3 w-[18px] text-[18px] font-medium">英</span>
      <button class="ml-3 w-[77px] text-base leading-[23px] text-center">17:10<br>2022/1/15</button>
      <button class="relative ml-[22px] w-[30px] h-8" aria-label="通知">
        <svg class="absolute left-0 top-1.5 w-5 h-5" viewBox="0 0 20 20"><path d="M0 0h20v15h-9l-4 4v-4H0z"/><path d="M4 4.500h12M4 7.500h12M4 10.500h8" stroke="#d5e3ea"/></svg>
        <span class="absolute left-2.5 top-[15px] w-5 h-5 rounded-full bg-[#d3d6d8] border border-[#777] text-[15px] leading-[18px] font-bold text-center">2</span>
      </button>
      <span class="ml-4 mr-[5px] w-px h-[50px] bg-[#a9b8c0]"></span>
    </div>
    <svg class="absolute right-[7px] bottom-0 w-5 h-2" viewBox="0 0 20 8"><path d="M0 8L18 1l2 1-5 6z" fill="#ed1c24"/></svg>
  </section>
</body>
</html>
